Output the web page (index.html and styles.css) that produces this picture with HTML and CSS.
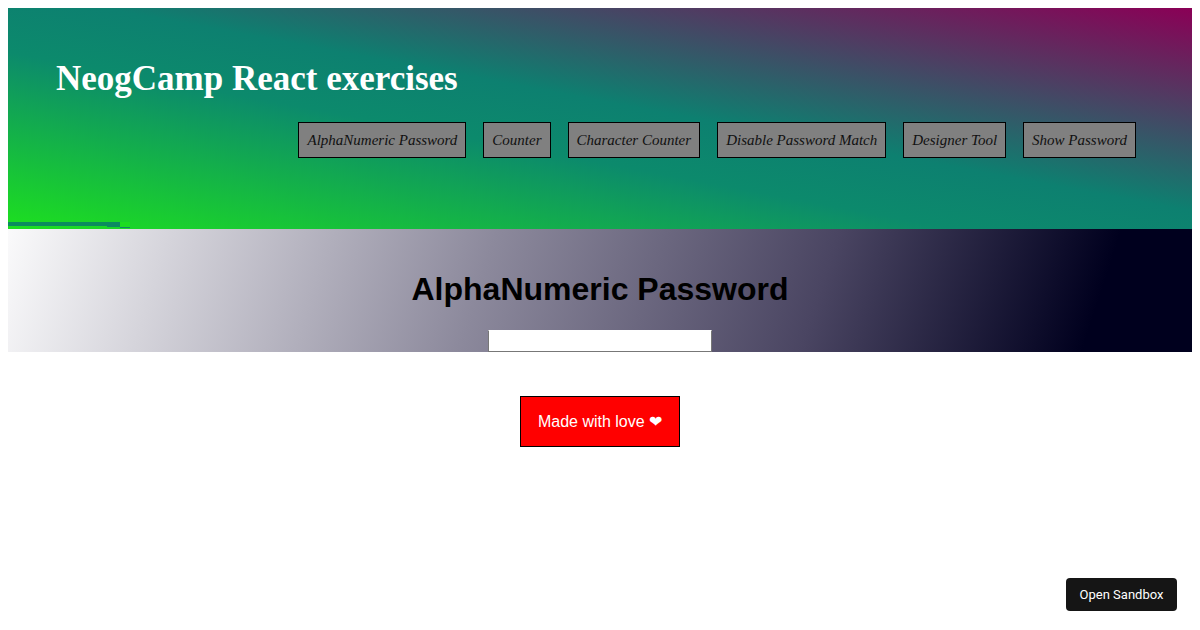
FILE: index.html
```html
<!DOCTYPE html>
<html lang="en">

<head>
    <meta charset="UTF-8">
    <meta name="viewport" content="width=device-width, initial-scale=1">
    <title>NeogCamp React exercises</title>
    <link rel="stylesheet" href="styles.css">
</head>

<body>
    <header class="header">
        <h1 class="title">NeogCamp React exercises</h1>
        <nav class="nav">
            <button class="nav-btn">AlphaNumeric Password</button>
            <button class="nav-btn">Counter</button>
            <button class="nav-btn">Character Counter</button>
            <button class="nav-btn">Disable Password Match</button>
            <button class="nav-btn">Designer Tool</button>
            <button class="nav-btn">Show Password</button>
        </nav>
        <div class="strip"><span class="strip-a"></span><span class="strip-b"></span><span class="strip-c"></span></div>
    </header>

    <section class="exercise">
        <h1 class="exercise-title">AlphaNumeric Password</h1>
        <input class="exercise-input" type="text">
    </section>

    <footer class="footer">
        <div class="love">Made with love ❤</div>
    </footer>

    <button class="sandbox-btn">Open Sandbox</button>
</body>

</html>
```

FILE: styles.css
```css
body {
    margin: 8px;
    font-family: "Liberation Serif", serif;
    background: #fff;
}

.header {
    height: 221px;
    box-sizing: border-box;
    padding: 51px 56px 0 48px;
    display: flex;
    flex-direction: column;
    background: linear-gradient(to top right, #1de01f 0%, #0c8a6c 40%, #0d8070 54%, #8a0056 100%);
}

.title {
    margin: 0;
    font-size: 35px;
    font-weight: bold;
    color: #fff;
    line-height: 40px;
}

.nav {
    margin-top: 23px;
    display: flex;
    justify-content: flex-end;
    gap: 17px;
}

.nav-btn {
    height: 36px;
    padding: 0 8px;
    background: #808080;
    border: 1px solid #000;
    font-family: "Liberation Serif", serif;
    font-style: italic;
    font-size: 15px;
    color: #111;
}

.strip {
    margin: auto 0 1px -48px;
    display: flex;
    align-items: flex-start;
    height: 6px;
}

.strip-a {
    width: 99px;
    height: 4px;
    background: #0b8c5e;
}

.strip-b {
    width: 13px;
    height: 5px;
    background: #0c8a62;
}

.strip-c {
    width: 10px;
    height: 6px;
    background: linear-gradient(#1ddc22 0, #1ddc22 5px, #0d8a66 5px);
}

.exercise {
    padding: 42px 0 0;
    text-align: center;
    height: 123px;
    box-sizing: border-box;
    background: linear-gradient(108deg, #fafafb 0%, #8c899c 40%, #4a4562 68%, #00001e 91%);
    font-family: "Liberation Sans", Arial, sans-serif;
}

.exercise-title {
    margin: 0 0 22px;
    font-size: 32px;
    line-height: 37px;
    color: #000;
}

.exercise-input {
    display: block;
    margin: 0 auto;
    width: 224px;
    height: 22px;
    box-sizing: border-box;
    border: 1px solid #777;
    border-top-color: #fff;
    background: #fff;
}

.footer {
    display: flex;
    justify-content: center;
    padding-top: 44px;
}

.love {
    padding: 16px 17px;
    line-height: 17px;
    background: #ff0000;
    border: 1px solid #000;
    color: #fff;
    font-family: "Liberation Sans", Arial, sans-serif;
    font-size: 16px;
}

.sandbox-btn {
    position: fixed;
    right: 23px;
    bottom: 19px;
    width: 111px;
    height: 33px;
    border: none;
    border-radius: 4px;
    background: #151515;
    color: #fff;
    font-family: Roboto, "Liberation Sans", sans-serif;
    font-size: 13px;
}
```
